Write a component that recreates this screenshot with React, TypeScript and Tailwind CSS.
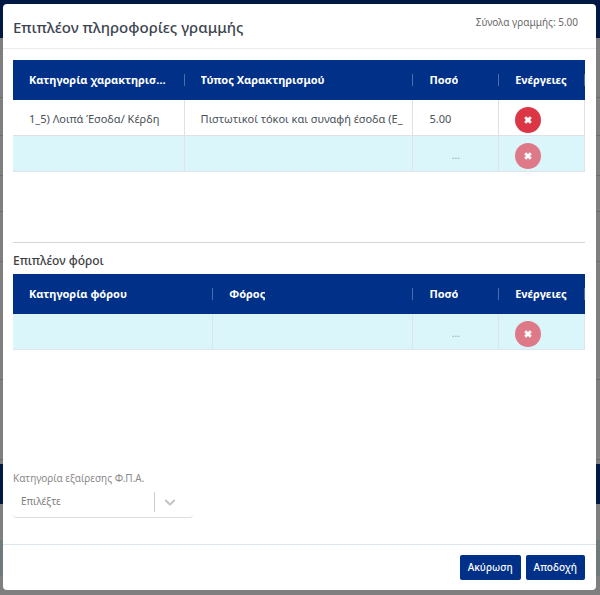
type Column = { label: string; width: string };

const classificationColumns: Column[] = [
  { label: "Κατηγορία χαρακτηρισμού", width: "w-[30%]" },
  { label: "Τύπος Χαρακτηρισμού", width: "w-[40%]" },
  { label: "Ποσό", width: "w-[15%]" },
  { label: "Ενέργειες", width: "w-[15%]" },
];

const taxColumns: Column[] = [
  { label: "Κατηγορία φόρου", width: "w-[35%]" },
  { label: "Φόρος", width: "w-[35%]" },
  { label: "Ποσό", width: "w-[15%]" },
  { label: "Ενέργειες", width: "w-[15%]" },
];

// lines of the form behind the dialog
const backdropRows = ["h-[60px]", "h-[38px]", "h-[40px]", "h-[36px]", "h-[50px]", "h-[118px]", "h-[80px]"];

function DeleteButton({ disabled }: { disabled?: boolean }) {
  return (
    <button
      type="button"
      aria-label="Διαγραφή"
      disabled={disabled}
      className="flex size-[26px] items-center justify-center rounded-full bg-[#dc3545] text-white disabled:bg-[#de7a87]"
    >
      <svg viewBox="0 0 8 8" className="size-2" stroke="currentColor" strokeWidth="2.8">
        <path d="M1.2 1.2 6.8 6.8M6.8 1.2 1.2 6.8" />
      </svg>
    </button>
  );
}

function LinesTable({ label, columns, rows }: { label: string; columns: Column[]; rows: string[][] }) {
  return (
    <table aria-label={label} className="w-full table-fixed border-separate border-spacing-0">
      <thead>
        <tr className="h-10 bg-[#003087]">
          {columns.map((col) => (
            <th key={col.label} className={`${col.width} p-0 text-left text-[11px] font-bold text-white`}>
              <div className="flex h-3 items-center border-r border-[#4a6cab] pr-4 pl-4">
                <span className="truncate leading-5">{col.label}</span>
              </div>
            </th>
          ))}
        </tr>
      </thead>
      <tbody>
        {rows.map((row, i) => (
          <tr key={i} className="h-9 bg-white text-[11px] text-[#495057]">
            {row.map((cell, j) => (
              <td key={j} className="overflow-hidden border-r border-b border-[#dee2e6] p-0 pt-1 pl-4 whitespace-nowrap">
                {cell}
              </td>
            ))}
            <td className="border-r border-b border-[#dee2e6] p-0 pt-1 pl-4">
              <DeleteButton />
            </td>
          </tr>
        ))}
        <tr className="h-9 bg-[#dbf6fa] text-[#9aa5ab]">
          <td className="border-r border-b border-[#dfe3ea] p-0"></td>
          <td className="border-r border-b border-[#dfe3ea] p-0"></td>
          <td className="border-r border-b border-[#dfe3ea] p-0 pt-1 text-center text-[10px]">...</td>
          <td className="border-r border-b border-[#dfe3ea] p-0 pt-1 pl-4">
            <DeleteButton disabled />
          </td>
        </tr>
      </tbody>
    </table>
  );
}

function Backdrop() {
  return (
    <div aria-hidden="true" className="absolute inset-0 flex flex-col bg-[#7f7f7f]">
      <div className="h-[38px] bg-[#001843]" />
      <div className="h-[426px]">
        {backdropRows.map((height, i) => (
          <div key={i} className={`${height} border-b border-[#6c6f72]`} />
        ))}
      </div>
      <div className="h-10 bg-[#001843]" />
      <div className="h-9" />
      <div className="h-9 bg-[#6d7b7d]" />
    </div>
  );
}

export default function App() {
  return (
    <div className="relative min-h-screen font-['Noto_Sans','Open_Sans',sans-serif]">
      <Backdrop />
      <div className="relative px-[3px] pt-1 pb-1">
        <div role="dialog" aria-labelledby="dialog-title" className="mr-px rounded-sm bg-white">
          <header className="flex justify-between border-b border-[#e9ecef] px-[10px] pt-[11px] pb-[9px]">
            <h1 id="dialog-title" className="text-[15px] leading-6 font-medium text-[#3c4450]">
              Επιπλέον πληροφορίες γραμμής
            </h1>
            <p className="pt-px pr-2 text-[10px] leading-3 text-[#6a6a6a]">Σύνολα γραμμής: 5.00</p>
          </header>

          <main className="pt-[11px] pr-[11px] pl-[10px]">
            <section className="min-h-[182px]">
              <LinesTable
                label="Χαρακτηρισμοί"
                columns={classificationColumns}
                rows={[["1_5) Λοιπά Έσοδα/ Κέρδη", "Πιστωτικοί τόκοι και συναφή έσοδα (E_", "5.00"]]}
              />
            </section>

            <section className="min-h-[228px] border-t border-[#d5d5d5] pt-2">
              <h2 className="pb-[3px] text-xs leading-5 font-medium text-[#3c4043]">Επιπλέον φόροι</h2>
              <LinesTable label="Επιπλέον φόροι" columns={taxColumns} rows={[]} />
            </section>

            <div className="w-[180px] pb-[26px]">
              <label htmlFor="vat-exemption" className="block text-[10px] leading-4 text-[#8a8a8a]">
                Κατηγορία εξαίρεσης Φ.Π.Α.
              </label>
              <div className="relative flex h-8 items-center rounded-b-sm border-b border-[#d9dee2]">
                <select
                  id="vat-exemption"
                  className="h-full w-full appearance-none bg-transparent pl-2 text-[10px] text-[#7d7d7d]"
                >
                  <option>Επιλέξτε</option>
                </select>
                <span className="pointer-events-none absolute right-[14px] flex h-5 items-center border-l border-[#cccccc] pl-[6px]">
                  <svg viewBox="0 0 20 20" className="size-[18px] fill-[#c4c4c4]">
                    <path d="M4.516 7.548c.436-.446 1.043-.481 1.576 0L10 11.295l3.908-3.747c.533-.481 1.141-.446 1.574 0 .436.445.408 1.197 0 1.615-.406.418-4.695 4.502-4.695 4.502a1.095 1.095 0 0 1-1.576 0S4.924 9.581 4.516 9.163s-.436-1.17 0-1.615z" />
                  </svg>
                </span>
              </div>
            </div>
          </main>

          <footer className="flex justify-end gap-[5px] border-t border-[#dee6ec] py-[10px] pr-[11px]">
            <button type="button" className="h-[25px] rounded-xs bg-[#003087] px-2 text-[10px] font-medium text-white">
              Ακύρωση
            </button>
            <button type="button" className="h-[25px] rounded-xs bg-[#003087] px-2 text-[10px] font-medium text-white">
              Αποδοχή
            </button>
          </footer>
        </div>
      </div>
    </div>
  );
}
